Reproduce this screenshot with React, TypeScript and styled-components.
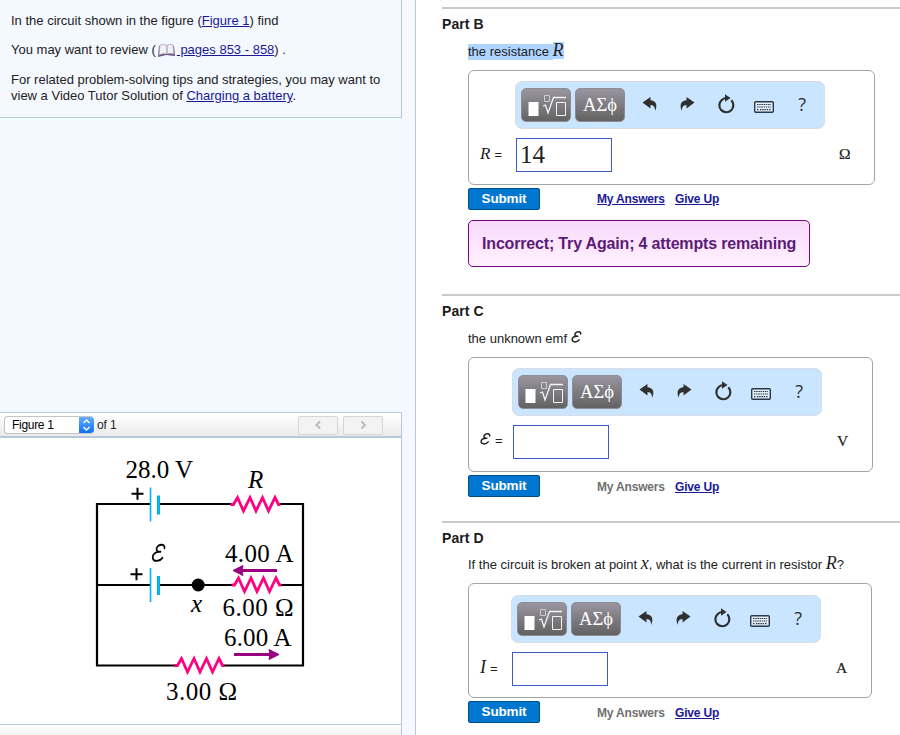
import React from "react";
import styled, { createGlobalStyle, css } from "styled-components";

const GlobalStyle = createGlobalStyle`
  * { box-sizing: border-box; }
  body {
    margin: 0;
    background: #fff;
    color: #222;
    font: 13px/16px "Liberation Sans", Arial, sans-serif;
    overflow: hidden;
  }
`;

const Page = styled.div`
  display: flex;
  width: 900px;
  height: 735px;
  overflow: hidden;
`;

const Sidebar = styled.aside`
  display: flex;
  flex-direction: column;
  justify-content: space-between;
  width: 416px;
  flex: none;
  background: #f4f8ff;
  border-right: 1px solid #b7c7da;
`;

const Intro = styled.section`
  width: 402px;
  height: 118px;
  padding: 13px 0 0 11px;
  border: solid #b5c9dc;
  border-width: 0 1px 1px 0;
`;

const Line = styled.p<{ $gap?: number }>`
  margin: 0 0 ${(p) => p.$gap ?? 0}px;
  height: 16px;
  white-space: nowrap;
`;

const Link = styled.a`
  color: #1a1a96;
  text-decoration: underline;
`;

const BookIcon = styled.svg`
  width: 18px;
  height: 14px;
  margin: 0 1px 0 2px;
  vertical-align: -4px;
`;

const FigurePanel = styled.section`
  display: flex;
  flex-direction: column;
  width: 402px;
  height: 323px;
  border: solid #b5c9dc;
  border-width: 1px 1px 0 0;
  background: #fff;
`;

const FigureBar = styled.header`
  display: flex;
  align-items: center;
  height: 25px;
  padding: 0 18px 0 4px;
  background: linear-gradient(#fff, #ebebeb);
  border-bottom: 2px solid #b5c9dc;
  font-size: 12px;
  letter-spacing: -0.15px;
  color: #222;
`;

const FigureSelect = styled.div`
  display: flex;
  align-items: stretch;
  justify-content: space-between;
  width: 90px;
  height: 18px;
  margin-right: 3px;
  padding-left: 7px;
  line-height: 17px;
  letter-spacing: -0.3px;
  color: #000;
  background: #fff;
  border: 1px solid #c4c4c4;
  border-right: 0;
  border-radius: 4px;
  overflow: hidden;
`;

const Stepper = styled.svg`
  width: 15px;
  height: 18px;
  margin-top: -1px;
  background: linear-gradient(#6bb1fb, #0a6bfd);
`;

const Pager = styled.div`
  display: flex;
  gap: 5px;
  margin-left: auto;
`;

const PagerButton = styled.button`
  display: flex;
  align-items: center;
  justify-content: center;
  width: 40px;
  height: 19px;
  margin-top: 1px;
  padding: 0;
  background: #f3f3f3;
  border: 1px solid #d6d6d6;
  border-radius: 2px;
`;

const FigureBody = styled.div`
  height: 286px;
`;

const FigureFooter = styled.footer`
  flex: 1;
  border-top: 1px solid #b5c9dc;
  background: linear-gradient(#fff, #f2f2f2);
`;

const Parts = styled.main`
  flex: 1;
  min-width: 0;
  padding: 7px 0 0 26px;
`;

const Part = styled.section<{ $height: number }>`
  height: ${(p) => p.$height}px;
  border-top: 2px solid #c9c9c9;
  padding-top: 7px;
`;

const PartTitle = styled.h2`
  margin: 0;
  font-size: 14px;
  line-height: 16px;
  letter-spacing: 0.1px;
  color: #1c1c1c;
`;

const PartBody = styled.div<{ $height: number }>`
  margin-left: 26px;
  padding-top: ${(p) => p.$height}px;
`;

const Prompt = styled.p<{ $gap: number }>`
  display: flex;
  align-items: baseline;
  margin: 0 0 ${(p) => p.$gap}px;
  height: 17px;
  line-height: 16px;
  white-space: pre;
`;

const selected = css`
  background: #aed4ff;
`;

const Words = styled.span<{ $selected?: boolean }>`
  ${(p) => p.$selected && selected}
`;

const MathVar = styled.i<{ $selected?: boolean; $size?: number }>`
  font: italic ${(p) => p.$size ?? 18}px/17px "Liberation Serif", serif;
  ${(p) => p.$selected && selected}
`;

const ScriptE = styled.svg<{ $w: number }>`
  width: ${(p) => p.$w}px;
  height: 12px;
  flex: none;
`;

const AnswerBox = styled.div<{ $width: number; $left: number; $top: number }>`
  width: ${(p) => p.$width}px;
  height: 115px;
  padding: ${(p) => p.$top}px 0 0 ${(p) => p.$left}px;
  border: 1px solid #a4a4a4;
  border-radius: 6px;
`;

const Toolbar = styled.div`
  display: flex;
  align-items: center;
  width: 310px;
  height: 48px;
  padding-left: 5px;
  background: #cae5ff;
  border: 1px solid #d8dde2;
  border-radius: 7px;
`;

const ToolKey = styled.button`
  width: 50px;
  height: 34px;
  margin: 0 4px 0 0;
  padding: 0;
  color: #fff;
  font: 18.5px/30px "Liberation Serif", serif;
  background: linear-gradient(#9995a0, #626262);
  border: 1px solid #8c8c91;
  border-radius: 5px;
`;

const KeyArt = styled.svg`
  display: block;
  width: 48px;
  height: 32px;
`;

const ToolIcons = styled.svg`
  width: 190px;
  height: 46px;
  margin-left: 1px;
`;

const AnswerRow = styled.div<{ $left: number }>`
  display: grid;
  grid-template-columns: ${(p) => p.$left - 11}px 96px 1fr;
  align-items: center;
  height: 34px;
  margin: 9px 0 0 ${(p) => 11 - p.$left}px;
`;

const Label = styled.div`
  display: flex;
  align-items: baseline;
  gap: 4px;
  padding-bottom: 2px;
  font-size: 13px;
`;

const Answer = styled.input`
  width: 96px;
  height: 34px;
  margin-left: 1px;
  padding: 0 0 1px 3px;
  color: #222;
  font: 25px "Liberation Serif", serif;
  background: #fff;
  border: 1px solid #3b5bc9;
  border-radius: 0;
  outline: 0;
`;

const Unit = styled.span`
  justify-self: end;
  width: 35px;
  margin-bottom: 2px;
  font: 15.5px/18px "Liberation Serif", serif;
  -webkit-text-stroke: 0.2px #222;
`;

const Actions = styled.div`
  display: flex;
  align-items: center;
  height: 22px;
  margin-top: 3px;
  font-size: 12px;
  font-weight: bold;
`;

const Submit = styled.button`
  width: 72px;
  height: 22px;
  margin-right: 57px;
  padding: 0 0 1px;
  color: #fff;
  font: bold 13.5px/18px "Liberation Sans", sans-serif;
  letter-spacing: -0.15px;
  background: #0076d1;
  border: 1px solid #00508f;
  border-radius: 2px;
`;

const Action = styled.a<{ $muted?: boolean; $raised?: boolean }>`
  width: 78px;
  padding: ${(p) => (p.$raised ? "0 0 1px" : "1px 0 0")};
  white-space: nowrap;
  letter-spacing: -0.18px;
  color: ${(p) => (p.$muted ? "#707070" : "#1a1a96")};
  text-decoration: ${(p) => (p.$muted ? "none" : "underline")};
`;

const Feedback = styled.div`
  width: 342px;
  height: 47px;
  margin-top: 10px;
  padding-left: 13px;
  color: #5b1b77;
  font: bold 16px/45px "Liberation Sans", sans-serif;
  letter-spacing: -0.17px;
  white-space: nowrap;
  background: linear-gradient(#f8d9fb, #fff1ff);
  border: 1px solid #760683;
  border-radius: 5px;
`;

const Drawing = styled.svg`
  display: block;
`;

const E_PATH =
  "M9.6 2.9C10.4 .6 6 -.1 4.4 2.2C3.2 4 4.4 5.4 6.8 5.2M6.6 5.2C3 5.1 1 6.8 1.2 8.8C1.5 11.6 6.2 11.5 8.2 8.9";

const EmfSymbol = ({ w = 11 }: { w?: number }) => (
  <ScriptE $w={w} viewBox="0 0 11 12" role="img" aria-label="emf">
    <path d={E_PATH} fill="none" stroke="#222" strokeWidth="1.5" strokeLinecap="round" />
  </ScriptE>
);

const RESISTOR = "M-1 0H2L6-7L12 6.5L18.5-7L24.5 6.5L31-7L37 6.5L43.5-7L47 0H49";

const Resistor = ({ x, y }: { x: number; y: number }) => (
  <path
    transform={`translate(${x} ${y})`}
    d={RESISTOR}
    fill="none"
    stroke="#ff0080"
    strokeWidth="2.8"
  />
);

const Battery = ({ y }: { y: number }) => (
  <g stroke="#00b5ee">
    <path d={`M150.5 ${y - 17}V${y + 17}`} strokeWidth="1.6" />
    <path d={`M158.5 ${y - 9}V${y + 10}`} strokeWidth="3" />
  </g>
);

const Circuit = () => (
  <Drawing width="400" height="286" viewBox="0 438 400 286">
    <g fill="none" stroke="#000" strokeWidth="2.2">
      <path d="M150 504H97V665.5H178M224 665.5H303V504H280M159 504H233M97 585H150M159 585H234M280 585H303" />
      <path d="M131.5 493.7H143.5M137.5 487.7V499.7M130.5 574.3H142.5M136.5 568.3V580.3" strokeWidth="2" />
    </g>
    <Battery y={504.5} />
    <Battery y={585} />
    <Resistor x={231.5} y={504.5} />
    <Resistor x={232.5} y={585} />
    <Resistor x={175.5} y={665.5} />
    <circle cx="198.2" cy="585" r="6.5" />
    <g fill="#98007f" stroke="#98007f">
      <path d="M242 570.5H277M234 654.5H270" strokeWidth="3" />
      <path d="M233 570.5L243 565.5L242 570.5L243 575.5ZM279 654.5L269 649.5L270 654.5L269 659.5Z" />
    </g>
    <g fontFamily="Liberation Serif, serif" fontSize="25">
      <text x="125.5" y="478" textLength="67.5">28.0 V</text>
      <text x="225" y="562" textLength="68.5">4.00 A</text>
      <text x="222.5" y="616" textLength="71">6.00 Ω</text>
      <text x="224" y="646" textLength="67.5">6.00 A</text>
      <text x="166" y="700" textLength="71">3.00 Ω</text>
      <text x="248" y="488" fontStyle="italic">R</text>
      <text x="191" y="612" fontStyle="italic">x</text>
    </g>
    <path
      d={E_PATH}
      transform="translate(151 543.5) scale(1.4 1.6)"
      fill="none"
      stroke="#000"
      strokeWidth="1.2"
      strokeLinecap="round"
    />
  </Drawing>
);

const EquationToolbar = () => (
  <Toolbar>
    <ToolKey aria-label="Templates">
      <KeyArt viewBox="0 0 48 32" fill="none" stroke="#f4f4f4">
        <path d="M6.5 13H16.5V27H6.5Z" fill="#fff" stroke="none" />
        <path d="M22.5 6.5H27.5V12.5H22.5Z" stroke="#ccc" />
        <path d="M21 17L23.5 16L26 24L31.5 8.5H44" strokeWidth="1.3" />
        <path d="M34.5 13.5H43.5V26.5H34.5Z" />
      </KeyArt>
    </ToolKey>
    <ToolKey>ΑΣϕ</ToolKey>
    <ToolIcons viewBox="0 0 190 46" fill="#303030">
      <path d="M12.5 20.5L20.5 15V18.2C25.5 18.5 28.2 22.5 25 29C25.2 25.5 24 23.2 20.5 23V26.5Z" />
      <path d="M64.5 20.5L56.5 15V18.2C51.5 18.5 48.8 22.5 52 29C51.8 25.5 53 23.2 56.5 23V26.5Z" />
      <g transform="translate(3 0)">
        <path
          d="M98.3 18.3A7 7 0 1 1 88.5 18.2Q90.5 16 93 16"
          fill="none"
          stroke="#303030"
          strokeWidth="2.2"
        />
        <path d="M92 12.2L97.5 16L92 19.8Z" />
      </g>
      <rect x="124.7" y="19.7" width="18.6" height="10.6" rx="1" fill="#e4eff9" stroke="#26384a" strokeWidth="1.4" />
      <path
        d="M127 22.5H141M127 25H141M127 27.6H129M130 27.6H138M139 27.6H141"
        stroke="#26384a"
        strokeWidth="1.2"
        strokeDasharray="1.5 .7"
      />
      <text x="168.3" y="29" fontFamily="Open Sans, sans-serif" fontSize="18">?</text>
    </ToolIcons>
  </Toolbar>
);

interface QuestionProps {
  width: number;
  left: number;
  top?: number;
  symbol: React.ReactNode;
  value?: string;
  unit: string;
  muted?: boolean;
}

const Question = ({ width, left, top = 10, symbol, value = "", unit, muted }: QuestionProps) => (
  <>
    <AnswerBox $width={width} $left={left} $top={top}>
      <EquationToolbar />
      <AnswerRow $left={left}>
        <Label>
          {symbol}
          <span>=</span>
        </Label>
        <Answer defaultValue={value} />
        <Unit>{unit}</Unit>
      </AnswerRow>
    </AnswerBox>
    <Actions>
      <Submit>Submit</Submit>
      <Action $muted={muted} $raised={!muted}>My Answers</Action>
      <Action $raised={!muted}>Give Up</Action>
    </Actions>
  </>
);

export default function App() {
  return (
    <>
      <GlobalStyle />
      <Page>
        <Sidebar>
          <Intro>
            <Line $gap={13}>
              In the circuit shown in the figure (<Link>Figure 1</Link>) find
            </Line>
            <Line $gap={14}>
              You may want to review (
              <BookIcon viewBox="0 0 18 14">
                <path d="M1 2L0 13L8 11L17 12L16 2Z" fill="#66517f" />
                <path d="M2 1Q6-.5 9 1.5L9 10Q5 9 1 11ZM9 1.5Q12-.5 15 1L16 10Q12 9 9 10Z" fill="#f3f0f5" stroke="#a49ab0" strokeWidth=".7" />
              </BookIcon>
              <Link>&nbsp;pages 853 - 858</Link>) .
            </Line>
            <Line>For related problem-solving tips and strategies, you may want to</Line>
            <Line>
              view a Video Tutor Solution of <Link>Charging a battery</Link>.
            </Line>
          </Intro>
          <FigurePanel>
            <FigureBar>
              <FigureSelect>
                Figure 1
                <Stepper viewBox="0 0 15 18" fill="none" stroke="#fff" strokeWidth="1.4">
                  <path d="M4.5 7L7.5 4L10.5 7M4.5 11L7.5 14L10.5 11" />
                </Stepper>
              </FigureSelect>
              of 1
              <Pager>
                {["M7 1.5L3.5 5L7 8.5", "M3.5 1.5L7 5L3.5 8.5"].map((d) => (
                  <PagerButton key={d}>
                    <svg width="10" height="10" fill="none" stroke="#bbb" strokeWidth="2">
                      <path d={d} />
                    </svg>
                  </PagerButton>
                ))}
              </Pager>
            </FigureBar>
            <FigureBody>
              <Circuit />
            </FigureBody>
            <FigureFooter />
          </FigurePanel>
        </Sidebar>
        <Parts>
          <Part $height={287}>
            <PartTitle>Part B</PartTitle>
            <PartBody $height={10}>
              <Prompt $gap={11}>
                <Words $selected>the resistance </Words>
                <MathVar $selected>R</MathVar>
              </Prompt>
              <Question width={407} left={46} symbol={<MathVar $size={17}>R</MathVar>} value="14" unit="Ω" />
              <Feedback>Incorrect; Try Again; 4 attempts remaining</Feedback>
            </PartBody>
          </Part>
          <Part $height={227}>
            <PartTitle>Part C</PartTitle>
            <PartBody $height={12}>
              <Prompt $gap={9}>
                <Words>the unknown emf </Words>
                <EmfSymbol />
              </Prompt>
              <Question width={405} left={43} symbol={<EmfSymbol w={11} />} unit="V" muted />
            </PartBody>
          </Part>
          <Part $height={214}>
            <PartTitle>Part D</PartTitle>
            <PartBody $height={9}>
              <Prompt $gap={11}>
                <Words>If the circuit is broken at point </Words>
                <MathVar>x</MathVar>
                <Words>, what is the current in resistor </Words>
                <MathVar>R</MathVar>
                <Words>?</Words>
              </Prompt>
              <Question width={404} left={42} top={11} symbol={<MathVar $size={18}>I</MathVar>} unit="A" muted />
            </PartBody>
          </Part>
        </Parts>
      </Page>
    </>
  );
}
